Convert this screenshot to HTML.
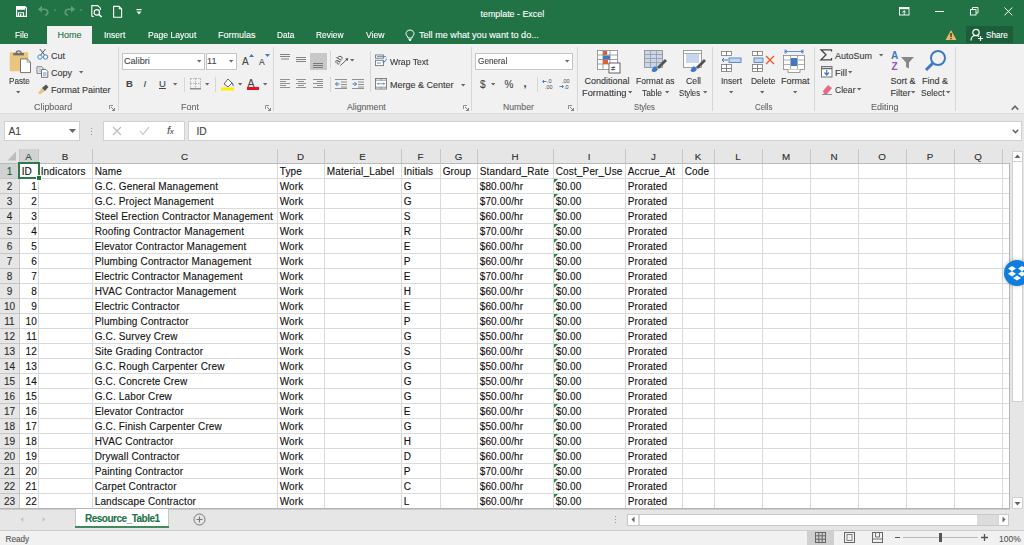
<!DOCTYPE html>
<html><head><meta charset="utf-8"><style>
*{box-sizing:border-box}
html,body{margin:0;padding:0}
body{width:1024px;height:545px;overflow:hidden;position:relative;background:#e6e6e6;font-family:"Liberation Sans",sans-serif;color:#262626}
.a{position:absolute}
svg.a{overflow:visible}
.t{position:absolute;white-space:nowrap;line-height:1;-webkit-text-stroke:0.1px currentColor}
.c{position:absolute;white-space:nowrap;line-height:1;color:#111;-webkit-text-stroke:0.12px #111}
.d{letter-spacing:0.15px}
.dr{letter-spacing:0.15px}
.vl{position:absolute;width:1px;background:#dadada}
.hl{position:absolute;height:1px;background:#dadada}
.gtri{position:absolute;width:0;height:0;border-top:4px solid #1f8a3b;border-right:4px solid transparent}
</style></head><body>

<div class="a" style="left:0px;top:0px;width:1024px;height:44px;background:#217346"></div>
<svg class="a" style="left:15px;top:5px;" width="13" height="13" viewBox="0 0 13 13"><path d="M1.6 1.6h8.4l1.4 1.4v8.4h-9.8z" fill="none" stroke="#fff" stroke-width="1.2"/><rect x="2" y="2" width="8" height="2.8" fill="#fff"/><path d="M3.5 11.4V7.8h5v3.6" fill="none" stroke="#fff" stroke-width="1.1"/><rect x="5" y="9" width="1.3" height="2" fill="#fff"/></svg>
<svg class="a" style="left:36px;top:4px;" width="22" height="14" viewBox="0 0 22 14"><path d="M1.8 5.2L6 1.8v6.8z" fill="#5f9c78"/><path d="M5 5.2h3.2c4 0 5 4.2 1 6.3" fill="none" stroke="#5f9c78" stroke-width="1.6"/><path d="M17.5 5.5h3l-1.5 1.7z" fill="#5f9c78"/></svg>
<svg class="a" style="left:62px;top:4px;" width="22" height="14" viewBox="0 0 22 14"><path d="M13.2 5.2L9 1.8v6.8z" fill="#5f9c78"/><path d="M10 5.2H6.8c-4 0-5 4.2-1 6.3" fill="none" stroke="#5f9c78" stroke-width="1.6"/><path d="M17.6 5.5h3l-1.5 1.7z" fill="#5f9c78"/></svg>
<svg class="a" style="left:90px;top:4px;" width="14" height="14" viewBox="0 0 14 14"><path d="M1.8 12.4V1.6h6l2.6 2.6v1.8" fill="none" stroke="#fff" stroke-width="1.1"/><path d="M1.8 12.4h2" stroke="#fff" stroke-width="1.1"/><circle cx="6.8" cy="8.4" r="2.7" fill="none" stroke="#fff" stroke-width="1.2"/><path d="M8.8 10.4l2.8 2.6" stroke="#fff" stroke-width="1.5"/></svg>
<svg class="a" style="left:112px;top:5px;" width="11" height="13" viewBox="0 0 11 13"><path d="M1.6 1.4h5.4l2.6 2.6v8.2h-8z" fill="none" stroke="#fff" stroke-width="1.1"/><path d="M6.8 1.4l2.8 2.8H6.8z" fill="#fff"/></svg>
<svg class="a" style="left:136px;top:9px;" width="7" height="7" viewBox="0 0 7 7"><rect x="0.5" y="0" width="5" height="1.2" fill="#fff"/><path d="M0.5 2.5h5l-2.5 3z" fill="#fff"/></svg>
<div class="t" style="left:480.5px;top:9.67px;font-size:8.9px;color:#fff;font-weight:normal;">template - Excel</div>
<svg class="a" style="left:899px;top:7px;" width="11" height="9" viewBox="0 0 11 9"><rect x="0.5" y="0.5" width="9.5" height="7.5" fill="none" stroke="#fff" stroke-width="0.9"/><path d="M0.5 1.6h9.5" stroke="#fff" stroke-width="1.2"/><path d="M5.2 3.5v4.5" stroke="#fff" stroke-width="0.9"/><path d="M3.2 5.5l2-1.6 2 1.6" fill="none" stroke="#fff" stroke-width="0.8"/></svg>
<div class="a" style="left:935px;top:11px;width:9px;height:1px;background:#fff"></div>
<svg class="a" style="left:970px;top:7px;" width="9" height="9" viewBox="0 0 9 9"><rect x="0.5" y="2.5" width="5.5" height="5.5" fill="none" stroke="#fff" stroke-width="0.9"/><path d="M2.5 2.5v-2h5.5v5.5h-2" fill="none" stroke="#fff" stroke-width="0.9"/></svg>
<svg class="a" style="left:1004px;top:7px;" width="9" height="9" viewBox="0 0 9 9"><path d="M0.5 0.5l7.8 7.8M8.3 0.5l-7.8 7.8" stroke="#fff" stroke-width="1"/></svg>
<div class="a" style="left:47px;top:26px;width:45px;height:18px;background:#f1f1f1"></div>
<div class="t" style="left:15px;top:31.38px;font-size:9px;color:#fff;font-weight:normal;transform:scaleX(0.931);transform-origin:0 0;">File</div>
<div class="t" style="left:57.5px;top:31.38px;font-size:9px;color:#217346;font-weight:normal;">Home</div>
<div class="t" style="left:103.5px;top:31.38px;font-size:9px;color:#fff;font-weight:normal;transform:scaleX(0.947);transform-origin:0 0;">Insert</div>
<div class="t" style="left:147.5px;top:31.38px;font-size:9px;color:#fff;font-weight:normal;transform:scaleX(0.955);transform-origin:0 0;">Page Layout</div>
<div class="t" style="left:218px;top:31.38px;font-size:9px;color:#fff;font-weight:normal;">Formulas</div>
<div class="t" style="left:276.5px;top:31.38px;font-size:9px;color:#fff;font-weight:normal;transform:scaleX(0.919);transform-origin:0 0;">Data</div>
<div class="t" style="left:316px;top:31.38px;font-size:9px;color:#fff;font-weight:normal;transform:scaleX(0.931);transform-origin:0 0;">Review</div>
<div class="t" style="left:365.5px;top:31.38px;font-size:9px;color:#fff;font-weight:normal;transform:scaleX(0.954);transform-origin:0 0;">View</div>
<svg class="a" style="left:405px;top:29px;" width="10" height="12" viewBox="0 0 10 12"><path d="M5 1 C2 1 1 3.5 1 4.5 C1 6.5 3 7.5 3 9 h4 C7 7.5 9 6.5 9 4.5 C9 3.5 8 1 5 1z" fill="none" stroke="#fff" stroke-width="1"/><path d="M3.5 10.5h3M4 11.5h2" stroke="#fff" stroke-width="0.9"/></svg>
<div class="t" style="left:419px;top:31.05px;font-size:9.1px;color:#fff;font-weight:normal;">Tell me what you want to do...</div>
<svg class="a" style="left:944px;top:29px;" width="14" height="12" viewBox="0 0 14 12"><path d="M7 1L12.5 11H1.5z" fill="#e9b965"/><rect x="6.3" y="4" width="1.4" height="4" fill="#333"/><rect x="6.3" y="9" width="1.4" height="1.2" fill="#333"/></svg>
<div class="a" style="left:966px;top:26px;width:47px;height:17px;background:#1b5e39"></div>
<svg class="a" style="left:970px;top:28px;" width="14" height="13" viewBox="0 0 14 13"><circle cx="6" cy="4.5" r="3.2" fill="none" stroke="#fff" stroke-width="1.2"/><path d="M1 12.5 C1 8.5 3 7.5 6 7.5 C7.5 7.5 8.5 8 9 8.5" fill="none" stroke="#fff" stroke-width="1.2"/><path d="M10.5 8v5M8 10.5h5" stroke="#fff" stroke-width="1.1"/></svg>
<div class="t" style="left:986px;top:32.06px;font-size:8.2px;color:#fff;font-weight:normal;">Share</div>
<div class="a" style="left:0px;top:44px;width:1024px;height:69px;background:#f1f1f1"></div>
<div class="a" style="left:0px;top:113px;width:1024px;height:1px;background:#dcdcdc"></div>
<div class="a" style="left:118px;top:47px;width:1px;height:64px;background:#d6d6d6"></div>
<div class="a" style="left:273px;top:47px;width:1px;height:64px;background:#d6d6d6"></div>
<div class="a" style="left:471px;top:47px;width:1px;height:64px;background:#d6d6d6"></div>
<div class="a" style="left:577px;top:47px;width:1px;height:64px;background:#d6d6d6"></div>
<div class="a" style="left:712px;top:47px;width:1px;height:64px;background:#d6d6d6"></div>
<div class="a" style="left:814px;top:47px;width:1px;height:64px;background:#d6d6d6"></div>
<div class="a" style="left:955px;top:47px;width:1px;height:64px;background:#d6d6d6"></div>
<div class="t" style="left:33.5px;top:103.14px;font-size:8.7px;color:#666;font-weight:normal;transform:scaleX(1.027);transform-origin:0 0;">Clipboard</div>
<div class="t" style="left:181px;top:103.14px;font-size:8.7px;color:#666;font-weight:normal;transform:scaleX(1.034);transform-origin:0 0;">Font</div>
<div class="t" style="left:347px;top:103.14px;font-size:8.7px;color:#666;font-weight:normal;">Alignment</div>
<div class="t" style="left:503px;top:103.14px;font-size:8.7px;color:#666;font-weight:normal;">Number</div>
<div class="t" style="left:634px;top:103.14px;font-size:8.7px;color:#666;font-weight:normal;transform:scaleX(0.886);transform-origin:0 0;">Styles</div>
<div class="t" style="left:754.5px;top:103.14px;font-size:8.7px;color:#666;font-weight:normal;transform:scaleX(0.904);transform-origin:0 0;">Cells</div>
<div class="t" style="left:871px;top:103.14px;font-size:8.7px;color:#666;font-weight:normal;transform:scaleX(1.034);transform-origin:0 0;">Editing</div>
<svg class="a" style="left:109px;top:105px;" width="6" height="6" viewBox="0 0 6 6"><path d="M0.5 4V0.5H4" fill="none" stroke="#777" stroke-width="0.8"/><path d="M2 2l3.5 3.5M5.5 3v2.5H3" fill="none" stroke="#777" stroke-width="0.9"/></svg>
<svg class="a" style="left:265px;top:105px;" width="6" height="6" viewBox="0 0 6 6"><path d="M0.5 4V0.5H4" fill="none" stroke="#777" stroke-width="0.8"/><path d="M2 2l3.5 3.5M5.5 3v2.5H3" fill="none" stroke="#777" stroke-width="0.9"/></svg>
<svg class="a" style="left:463px;top:105px;" width="6" height="6" viewBox="0 0 6 6"><path d="M0.5 4V0.5H4" fill="none" stroke="#777" stroke-width="0.8"/><path d="M2 2l3.5 3.5M5.5 3v2.5H3" fill="none" stroke="#777" stroke-width="0.9"/></svg>
<svg class="a" style="left:568px;top:105px;" width="6" height="6" viewBox="0 0 6 6"><path d="M0.5 4V0.5H4" fill="none" stroke="#777" stroke-width="0.8"/><path d="M2 2l3.5 3.5M5.5 3v2.5H3" fill="none" stroke="#777" stroke-width="0.9"/></svg>
<svg class="a" style="left:1011px;top:104.5px;" width="8" height="6" viewBox="0 0 8 6"><path d="M0.8 4.6L4 1.2l3.2 3.4" fill="none" stroke="#6a6a6a" stroke-width="1.6"/></svg>
<svg class="a" style="left:9px;top:48px;" width="24" height="26" viewBox="0 0 24 26"><rect x="0.7" y="4.2" width="18.5" height="19" rx="1" fill="#eac57f"/><rect x="4.2" y="5" width="10.8" height="2.4" fill="#707070"/><path d="M7.2 5.2a2.5 2.3 0 0 1 5 0" fill="none" stroke="#707070" stroke-width="1.3"/><path d="M11.5 10.9h6.7l3.3 3.3v10.4h-10z" fill="#fff" stroke="#666" stroke-width="0.9"/><path d="M18.2 10.9v3.3h3.3" fill="none" stroke="#888" stroke-width="0.8"/></svg>
<div class="t" style="left:8.75px;top:77.38px;font-size:9px;color:#383838;font-weight:normal;transform:scaleX(0.902);transform-origin:0 0;">Paste</div>
<svg class="a" style="left:15.8px;top:90.7px;" width="5" height="3" viewBox="0 0 5 3"><path d="M0 0h4.4l-2.2 2.6z" fill="#666"/></svg>
<svg class="a" style="left:36px;top:48px;" width="13" height="13" viewBox="0 0 13 13"><path d="M3.8 1l5 6.2M9.5 1L4.5 7.2" stroke="#555" stroke-width="1"/><circle cx="4" cy="9" r="2.2" fill="none" stroke="#4a86c8" stroke-width="1"/><circle cx="9.6" cy="9" r="2.2" fill="none" stroke="#4a86c8" stroke-width="1"/></svg>
<div class="t" style="left:51px;top:51.88px;font-size:9px;color:#383838;font-weight:normal;">Cut</div>
<svg class="a" style="left:36px;top:66px;" width="13" height="12" viewBox="0 0 13 12"><path d="M1 0.8h5l1 1v5.5H1z" fill="#fff" stroke="#666" stroke-width="0.9"/><path d="M2.5 3h2.5M2.5 5h2.5" stroke="#4a86c8" stroke-width="0.8"/><path d="M5.5 3.5h4.5l1.8 1.8v6H5.5z" fill="#fff" stroke="#666" stroke-width="0.9"/><path d="M7 7h3.5M7 9h3.5" stroke="#4a86c8" stroke-width="0.9"/></svg>
<div class="t" style="left:51px;top:68.88px;font-size:9px;color:#383838;font-weight:normal;">Copy</div>
<svg class="a" style="left:79.0px;top:71.4px;" width="5" height="3" viewBox="0 0 5 3"><path d="M0 0h4.4l-2.2 2.6z" fill="#666"/></svg>
<svg class="a" style="left:37px;top:84px;" width="12" height="11" viewBox="0 0 12 11"><path d="M1 9l4-5 3 3-5 3.5z" fill="#e8c47c"/><path d="M5 4l4-3.5 2.5 2.5-3.5 4z" fill="#555"/></svg>
<div class="t" style="left:51px;top:85.88px;font-size:9px;color:#383838;font-weight:normal;">Format Painter</div>
<div class="a" style="left:122px;top:52.5px;width:82.5px;height:17px;background:#fff;border:1px solid #c6c6c6"></div>
<div class="t" style="left:124px;top:56.80px;font-size:9.1px;color:#444;font-weight:normal;">Calibri</div>
<svg class="a" style="left:196.8px;top:59.7px;" width="5" height="3" viewBox="0 0 5 3"><path d="M0 0h4.4l-2.2 2.6z" fill="#666"/></svg>
<div class="a" style="left:205.8px;top:52.5px;width:31px;height:17px;background:#fff;border:1px solid #c6c6c6"></div>
<div class="t" style="left:207px;top:56.80px;font-size:9.1px;color:#444;font-weight:normal;">11</div>
<svg class="a" style="left:228.8px;top:59.7px;" width="5" height="3" viewBox="0 0 5 3"><path d="M0 0h4.4l-2.2 2.6z" fill="#666"/></svg>
<div class="t" style="left:242px;top:56.53px;font-size:10px;color:#444;font-weight:normal;">A</div>
<svg class="a" style="left:249px;top:54px;" width="5" height="3" viewBox="0 0 5 3"><path d="M0 3h5L2.5 0z" fill="#3f78c6"/></svg>
<div class="t" style="left:259px;top:57.80px;font-size:8.5px;color:#444;font-weight:normal;">A</div>
<svg class="a" style="left:265px;top:54px;" width="5" height="3" viewBox="0 0 5 3"><path d="M0 0h5L2.5 3z" fill="#3f78c6"/></svg>
<div class="t" style="left:126px;top:79.46px;font-size:9.5px;color:#444;font-weight:bold;">B</div>
<div class="t" style="left:143.5px;top:79.46px;font-size:9.5px;color:#444;font-weight:normal;font-style:italic">I</div>
<div class="t" style="left:159px;top:79.46px;font-size:9.5px;color:#444;font-weight:normal;text-decoration:underline">U</div>
<svg class="a" style="left:172.8px;top:83.2px;" width="5" height="3" viewBox="0 0 5 3"><path d="M0 0h4.4l-2.2 2.6z" fill="#666"/></svg>
<div class="a" style="left:184px;top:77px;width:1px;height:15px;background:#d6d6d6"></div>
<svg class="a" style="left:190px;top:78px;" width="11" height="12" viewBox="0 0 11 12"><path d="M0.5 0.5h10v10M0.5 0.5v10M5.5 0.5v10M0.5 5.5h10" fill="none" stroke="#aaa" stroke-width="0.9" stroke-dasharray="1.5,1"/><path d="M0 10.8h11" stroke="#777" stroke-width="1.2"/></svg>
<svg class="a" style="left:205.3px;top:83.2px;" width="5" height="3" viewBox="0 0 5 3"><path d="M0 0h4.4l-2.2 2.6z" fill="#666"/></svg>
<div class="a" style="left:215px;top:77px;width:1px;height:15px;background:#d6d6d6"></div>
<svg class="a" style="left:221px;top:78px;" width="14" height="13" viewBox="0 0 14 13"><path d="M3 6l4-5 4 4-4 4z" fill="#fff" stroke="#555" stroke-width="0.9"/><path d="M11 5c1 1 1.5 2 1 3" fill="none" stroke="#3f78c6" stroke-width="1.2"/><rect x="0" y="9.5" width="13" height="3" fill="#ffee00"/></svg>
<svg class="a" style="left:237.8px;top:83.2px;" width="5" height="3" viewBox="0 0 5 3"><path d="M0 0h4.4l-2.2 2.6z" fill="#666"/></svg>
<div class="t" style="left:247.5px;top:77.61px;font-size:10.5px;color:#444;font-weight:normal;">A</div>
<div class="a" style="left:247px;top:87px;width:12px;height:2.6px;background:#e8141a"></div>
<svg class="a" style="left:263.3px;top:83.2px;" width="5" height="3" viewBox="0 0 5 3"><path d="M0 0h4.4l-2.2 2.6z" fill="#666"/></svg>
<svg class="a" style="left:280px;top:54px;" width="11" height="7" viewBox="0 0 11 7"><path d="M0 0.5h10M0 2.5h10M1 5h8" stroke="#666" stroke-width="0.8"/></svg>
<svg class="a" style="left:296px;top:56px;" width="11" height="7" viewBox="0 0 11 7"><path d="M0 1.5h10M0 3.5h10M0 5.5h10" stroke="#666" stroke-width="0.8"/></svg>
<div class="a" style="left:310px;top:52.5px;width:17px;height:17px;background:#c8c8c8"></div>
<svg class="a" style="left:313px;top:60px;" width="11" height="8" viewBox="0 0 11 8"><path d="M0 3.5h10M0 5.5h10M0 7.5h10" stroke="#666" stroke-width="0.8"/></svg>
<div class="a" style="left:330px;top:51px;width:1px;height:17px;background:#d6d6d6"></div>
<svg class="a" style="left:335px;top:53px;" width="15" height="15" viewBox="0 0 15 15"><text x="0" y="0" font-size="8.5" font-family="Liberation Sans" fill="#505050" transform="translate(3.2,12.2) rotate(-58)">ab</text><path d="M5.3 12.6L12.3 6" stroke="#555" stroke-width="0.9"/><path d="M13.3 5l-3.2 0.8 2.4 2.4z" fill="#555"/></svg>
<svg class="a" style="left:349.8px;top:58.7px;" width="5" height="3" viewBox="0 0 5 3"><path d="M0 0h4.4l-2.2 2.6z" fill="#666"/></svg>
<div class="a" style="left:370px;top:51px;width:1px;height:41px;background:#d6d6d6"></div>
<svg class="a" style="left:375px;top:53px;" width="16" height="14" viewBox="0 0 16 14"><rect x="0.5" y="2" width="8" height="3.2" fill="#fff" stroke="#777" stroke-width="0.9"/><rect x="0.5" y="7.3" width="8" height="5.3" fill="#fff" stroke="#777" stroke-width="0.9"/><path d="M1.9 3.6h9.2M1.9 10h3.9" stroke="#4a86c8" stroke-width="0.9"/><path d="M11.2 5.6c0.3 1.6-0.6 2.8-2.4 3.2" fill="none" stroke="#4a86c8" stroke-width="1"/><path d="M7 9l2.1-1.6v2.9z" fill="#4a86c8"/></svg>
<div class="t" style="left:390px;top:57.88px;font-size:9px;color:#383838;font-weight:normal;transform:scaleX(0.958);transform-origin:0 0;">Wrap Text</div>
<svg class="a" style="left:280px;top:79px;" width="11" height="9" viewBox="0 0 11 9"><path d="M0 0.5h10M0 2.5h6M0 4.5h10M0 6.5h6M0 8.5h10" stroke="#777" stroke-width="0.8"/></svg>
<svg class="a" style="left:296px;top:79px;" width="11" height="9" viewBox="0 0 11 9"><path d="M0 0.5h10M2 2.5h6M0 4.5h10M2 6.5h6M0 8.5h10" stroke="#777" stroke-width="0.8"/></svg>
<svg class="a" style="left:313px;top:79px;" width="11" height="9" viewBox="0 0 11 9"><path d="M0 0.5h10M4 2.5h6M0 4.5h10M4 6.5h6M0 8.5h10" stroke="#777" stroke-width="0.8"/></svg>
<div class="a" style="left:330px;top:77px;width:1px;height:15px;background:#d6d6d6"></div>
<svg class="a" style="left:335px;top:79px;" width="13" height="10" viewBox="0 0 13 10"><path d="M0 0.5h12M6 3h6M6 5.5h6M6 8h6M0 9.5h12" stroke="#777" stroke-width="0.8"/><path d="M0.5 5h4M2.5 3l-2 2 2 2" fill="none" stroke="#3f78c6" stroke-width="1"/></svg>
<svg class="a" style="left:352px;top:79px;" width="13" height="10" viewBox="0 0 13 10"><path d="M0 0.5h12M6 3h6M6 5.5h6M6 8h6M0 9.5h12" stroke="#777" stroke-width="0.8"/><path d="M0.5 5h4M2.5 3l2 2-2 2" fill="none" stroke="#3f78c6" stroke-width="1"/></svg>
<svg class="a" style="left:375px;top:78px;" width="13" height="12" viewBox="0 0 13 12"><rect x="0.5" y="0.5" width="11" height="10.5" fill="#fff" stroke="#777" stroke-width="0.9"/><path d="M0.5 2.2h11M0.5 9.2h11M6 0.5v1.7M6 9.2v1.8" stroke="#777" stroke-width="0.8"/><path d="M2.5 5.7h7" stroke="#4a86c8" stroke-width="0.8"/><path d="M2 5.7l1.6-1.3v2.6zM10 5.7l-1.6-1.3v2.6z" fill="#4a86c8"/></svg>
<div class="t" style="left:390px;top:80.88px;font-size:9px;color:#383838;font-weight:normal;">Merge &amp; Center</div>
<svg class="a" style="left:460.55px;top:83.7px;" width="5" height="3" viewBox="0 0 5 3"><path d="M0 0h4.4l-2.2 2.6z" fill="#666"/></svg>
<div class="a" style="left:475px;top:52.5px;width:98px;height:17px;background:#fff;border:1px solid #c6c6c6"></div>
<div class="t" style="left:477.75px;top:56.80px;font-size:9.1px;color:#444;font-weight:normal;transform:scaleX(0.904);transform-origin:0 0;">General</div>
<svg class="a" style="left:565.3px;top:59.7px;" width="5" height="3" viewBox="0 0 5 3"><path d="M0 0h4.4l-2.2 2.6z" fill="#666"/></svg>
<div class="t" style="left:480px;top:79.53px;font-size:10px;color:#444;font-weight:normal;">$</div>
<svg class="a" style="left:490.8px;top:83.2px;" width="5" height="3" viewBox="0 0 5 3"><path d="M0 0h4.4l-2.2 2.6z" fill="#666"/></svg>
<div class="t" style="left:504.5px;top:79.53px;font-size:10px;color:#444;font-weight:normal;">%</div>
<div class="t" style="left:523.5px;top:77.69px;font-size:11px;color:#444;font-weight:bold;">,</div>
<div class="a" style="left:537px;top:77px;width:1px;height:15px;background:#d6d6d6"></div>
<svg class="a" style="left:542px;top:78px;" width="13" height="12" viewBox="0 0 13 12"><path d="M0.5 3.5h4M2 2l-1.5 1.5 1.5 1.5" fill="none" stroke="#3f78c6" stroke-width="0.9"/><text x="5" y="5" font-size="5.5" font-family="Liberation Sans" fill="#444">.0</text><text x="3" y="11" font-size="5.5" font-family="Liberation Sans" fill="#444">.00</text></svg>
<svg class="a" style="left:559px;top:78px;" width="13" height="12" viewBox="0 0 13 12"><path d="M0.5 8.5h4M3 7l1.5 1.5-1.5 1.5" fill="none" stroke="#3f78c6" stroke-width="0.9"/><text x="3" y="5" font-size="5.5" font-family="Liberation Sans" fill="#444">.00</text><text x="5" y="11" font-size="5.5" font-family="Liberation Sans" fill="#444">.0</text></svg>
<svg class="a" style="left:597px;top:50px;" width="24" height="24" viewBox="0 0 24 24"><g fill="#fff" stroke="#888" stroke-width="0.8"><rect x="0.5" y="0.5" width="20" height="19"/></g><path d="M0.5 5h20M0.5 9.5h20M0.5 14h20M6 0.5v19M13 0.5v19" stroke="#888" stroke-width="0.8"/><rect x="6" y="1" width="4" height="4" fill="#e55f2b"/><rect x="6" y="5.5" width="7" height="4" fill="#3f78c6"/><rect x="6" y="10" width="5" height="4" fill="#e55f2b"/><rect x="12" y="13" width="11" height="10" fill="#fff" stroke="#555" stroke-width="0.9"/><text x="14" y="21" font-size="8" font-family="Liberation Sans" fill="#333">≠</text></svg>
<div class="t" style="left:584.5px;top:77.38px;font-size:9px;color:#383838;font-weight:normal;">Conditional</div>
<div class="t" style="left:582px;top:89.38px;font-size:9px;color:#383838;font-weight:normal;transform:scaleX(1.035);transform-origin:0 0;">Formatting</div>
<svg class="a" style="left:627.8px;top:91.4px;" width="5" height="3" viewBox="0 0 5 3"><path d="M0 0h4.4l-2.2 2.6z" fill="#666"/></svg>
<svg class="a" style="left:644px;top:50px;" width="24" height="23" viewBox="0 0 24 23"><rect x="0.5" y="0.5" width="18" height="17" fill="#c5d6ee" stroke="#888" stroke-width="0.8"/><path d="M0.5 4.5h18M0.5 8.5h18M0.5 12.5h18M6.5 0.5v17M12.5 0.5v17" stroke="#999" stroke-width="0.8"/><path d="M10 22c-2 0-3-1-2-3l3-3 3 3c-1 2-2 3-4 3z" fill="#3f78c6"/><path d="M13 17l8-8 2 2-8 8z" fill="#555"/></svg>
<div class="t" style="left:636px;top:77.38px;font-size:9px;color:#383838;font-weight:normal;transform:scaleX(0.951);transform-origin:0 0;">Format as</div>
<div class="t" style="left:642px;top:89.38px;font-size:9px;color:#383838;font-weight:normal;transform:scaleX(0.930);transform-origin:0 0;">Table</div>
<svg class="a" style="left:664.8px;top:91.4px;" width="5" height="3" viewBox="0 0 5 3"><path d="M0 0h4.4l-2.2 2.6z" fill="#666"/></svg>
<svg class="a" style="left:683px;top:50px;" width="24" height="23" viewBox="0 0 24 23"><rect x="0.5" y="0.5" width="18" height="17" fill="#fff" stroke="#888" stroke-width="0.8"/><rect x="3" y="4" width="13" height="9" fill="#c5d6ee"/><path d="M0.5 3.5h18" stroke="#999" stroke-width="0.8"/><path d="M10 22c-2 0-3-1-2-3l3-3 3 3c-1 2-2 3-4 3z" fill="#3f78c6"/><path d="M13 17l8-8 2 2-8 8z" fill="#555"/></svg>
<div class="t" style="left:686px;top:77.38px;font-size:9px;color:#383838;font-weight:normal;transform:scaleX(0.968);transform-origin:0 0;">Cell</div>
<div class="t" style="left:679px;top:89.38px;font-size:9px;color:#383838;font-weight:normal;transform:scaleX(0.857);transform-origin:0 0;">Styles</div>
<svg class="a" style="left:703.3px;top:91.4px;" width="5" height="3" viewBox="0 0 5 3"><path d="M0 0h4.4l-2.2 2.6z" fill="#666"/></svg>
<svg class="a" style="left:721px;top:50px;" width="22" height="22" viewBox="0 0 22 22"><g fill="#fff" stroke="#777" stroke-width="0.8"><rect x="0.5" y="1.5" width="5" height="4"/><rect x="5.5" y="1.5" width="5" height="4"/><rect x="0.5" y="14.5" width="5" height="4"/><rect x="5.5" y="14.5" width="5" height="4"/><rect x="0.5" y="18.5" width="5" height="3"/><rect x="5.5" y="18.5" width="5" height="3"/></g><rect x="8" y="8" width="12" height="4.5" fill="#c5d6ee" stroke="#3f78c6" stroke-width="0.8"/><path d="M1 10h6M3 8l-2 2 2 2" fill="none" stroke="#3f78c6" stroke-width="1"/></svg>
<div class="t" style="left:721px;top:77.38px;font-size:9px;color:#383838;font-weight:normal;transform:scaleX(0.933);transform-origin:0 0;">Insert</div>
<svg class="a" style="left:729.3px;top:91.4px;" width="5" height="3" viewBox="0 0 5 3"><path d="M0 0h4.4l-2.2 2.6z" fill="#666"/></svg>
<svg class="a" style="left:752px;top:50px;" width="24" height="22" viewBox="0 0 24 22"><g fill="#fff" stroke="#777" stroke-width="0.8"><rect x="0.5" y="1.5" width="5" height="4"/><rect x="5.5" y="1.5" width="5" height="4"/><rect x="0.5" y="14.5" width="5" height="4"/><rect x="5.5" y="14.5" width="5" height="4"/><rect x="0.5" y="18.5" width="5" height="3"/><rect x="5.5" y="18.5" width="5" height="3"/></g><rect x="2" y="8" width="9" height="4.5" fill="#c5d6ee" stroke="#3f78c6" stroke-width="0.8"/><path d="M14 6l8 8M22 6l-8 8" stroke="#e55f2b" stroke-width="1.4"/></svg>
<div class="t" style="left:751px;top:77.38px;font-size:9px;color:#383838;font-weight:normal;transform:scaleX(0.942);transform-origin:0 0;">Delete</div>
<svg class="a" style="left:759.8px;top:91.4px;" width="5" height="3" viewBox="0 0 5 3"><path d="M0 0h4.4l-2.2 2.6z" fill="#666"/></svg>
<svg class="a" style="left:783px;top:49px;" width="23" height="24" viewBox="0 0 23 24"><path d="M2 2.5h18M2 0.5v4M20 0.5v4M4 1l-2 1.5 2 1.5M18 1l2 1.5-2 1.5" fill="none" stroke="#3f78c6" stroke-width="0.8"/><rect x="0.5" y="6.5" width="21" height="14" fill="#fff" stroke="#888" stroke-width="0.8"/><path d="M0.5 11h21M0.5 15.5h21M7.5 6.5v14M14.5 6.5v14" stroke="#999" stroke-width="0.8"/><rect x="8" y="9" width="6" height="8" fill="#3f78c6"/><path d="M5 20.5v3h12v-3" fill="#fff" stroke="#888" stroke-width="0.8"/></svg>
<div class="t" style="left:781px;top:77.38px;font-size:9px;color:#383838;font-weight:normal;">Format</div>
<svg class="a" style="left:792.8px;top:91.4px;" width="5" height="3" viewBox="0 0 5 3"><path d="M0 0h4.4l-2.2 2.6z" fill="#666"/></svg>
<svg class="a" style="left:820px;top:49px;" width="13" height="12" viewBox="0 0 13 12"><path d="M11.5 2.5V0.8H1l5 5-5 5h10.5V9" fill="none" stroke="#444" stroke-width="1.3"/></svg>
<div class="t" style="left:835px;top:51.88px;font-size:9px;color:#383838;font-weight:normal;">AutoSum</div>
<svg class="a" style="left:879.3px;top:53.7px;" width="5" height="3" viewBox="0 0 5 3"><path d="M0 0h4.4l-2.2 2.6z" fill="#666"/></svg>
<svg class="a" style="left:821px;top:66px;" width="12" height="12" viewBox="0 0 12 12"><rect x="0.5" y="0.5" width="10.5" height="10.5" fill="#fff" stroke="#666" stroke-width="0.9"/><path d="M0.5 2.5h10.5" stroke="#666" stroke-width="1.5"/><path d="M5.75 4v5M3.5 6.5l2.25 2.5 2.25-2.5" fill="none" stroke="#3f78c6" stroke-width="1.2"/></svg>
<div class="t" style="left:835px;top:68.88px;font-size:9px;color:#383838;font-weight:normal;transform:scaleX(1.043);transform-origin:0 0;">Fill</div>
<svg class="a" style="left:847.5999999999999px;top:70.9px;" width="5" height="3" viewBox="0 0 5 3"><path d="M0 0h4.4l-2.2 2.6z" fill="#666"/></svg>
<svg class="a" style="left:821px;top:84px;" width="12" height="11" viewBox="0 0 12 11"><path d="M2 7l5-6 4 3-5 6H3z" fill="#e86b86"/><path d="M1 10.5h10" stroke="#777" stroke-width="0.8"/></svg>
<div class="t" style="left:835px;top:85.88px;font-size:9px;color:#383838;font-weight:normal;transform:scaleX(0.953);transform-origin:0 0;">Clear</div>
<svg class="a" style="left:856.8px;top:88.0px;" width="5" height="3" viewBox="0 0 5 3"><path d="M0 0h4.4l-2.2 2.6z" fill="#666"/></svg>
<svg class="a" style="left:891px;top:50px;" width="24" height="21" viewBox="0 0 24 21"><text x="0" y="9" font-size="10" font-family="Liberation Sans" font-weight="bold" fill="#3f78c6">A</text><text x="0.5" y="20" font-size="10" font-family="Liberation Sans" font-weight="bold" fill="#9b59b6">Z</text><path d="M10 7h13l-5 5.5v6l-3-1.5v-4.5z" fill="#888"/></svg>
<div class="t" style="left:890.5px;top:77.38px;font-size:9px;color:#383838;font-weight:normal;">Sort &amp;</div>
<div class="t" style="left:890.5px;top:89.38px;font-size:9px;color:#383838;font-weight:normal;">Filter</div>
<svg class="a" style="left:911.0px;top:91.4px;" width="5" height="3" viewBox="0 0 5 3"><path d="M0 0h4.4l-2.2 2.6z" fill="#666"/></svg>
<svg class="a" style="left:924px;top:49px;" width="23" height="23" viewBox="0 0 23 23"><circle cx="14" cy="9" r="7" fill="none" stroke="#3f78c6" stroke-width="2"/><path d="M9 14l-7 7" stroke="#3f78c6" stroke-width="3"/></svg>
<div class="t" style="left:922px;top:77.38px;font-size:9px;color:#383838;font-weight:normal;">Find &amp;</div>
<div class="t" style="left:920.5px;top:89.38px;font-size:9px;color:#383838;font-weight:normal;transform:scaleX(0.940);transform-origin:0 0;">Select</div>
<svg class="a" style="left:946.1999999999999px;top:91.4px;" width="5" height="3" viewBox="0 0 5 3"><path d="M0 0h4.4l-2.2 2.6z" fill="#666"/></svg>
<div class="a" style="left:4px;top:121px;width:76px;height:20px;background:#fff;border:1px solid #d0d0d0"></div>
<div class="t" style="left:8.5px;top:126.78px;font-size:10.3px;color:#444;font-weight:normal;">A1</div>
<svg class="a" style="left:69px;top:129px;" width="7" height="4" viewBox="0 0 7 4"><path d="M0 0h7L3.5 4z" fill="#666"/></svg>
<div class="a" style="left:91px;top:128px;width:1px;height:1.2px;background:#999"></div>
<div class="a" style="left:91px;top:131px;width:1px;height:1.2px;background:#999"></div>
<div class="a" style="left:91px;top:134px;width:1px;height:1.2px;background:#999"></div>
<div class="a" style="left:103px;top:121px;width:82px;height:20px;background:#fff;border:1px solid #d0d0d0"></div>
<svg class="a" style="left:112px;top:126px;" width="11" height="10" viewBox="0 0 11 10"><path d="M1 1l8 8M9 1l-8 8" stroke="#bdbdbd" stroke-width="1.1"/></svg>
<svg class="a" style="left:139px;top:126px;" width="11" height="10" viewBox="0 0 11 10"><path d="M1 5l3 3.5L10 1" fill="none" stroke="#bdbdbd" stroke-width="1.1"/></svg>
<div class="t" style="left:167px;top:124.77px;font-size:11.5px;color:#555;font-weight:normal;font-family:"Liberation Serif",serif"><i>f</i><i style="font-size:8px;margin-left:-0.5px">x</i></div>
<div class="a" style="left:188px;top:121px;width:834px;height:20px;background:#fff;border:1px solid #d0d0d0"></div>
<div class="t" style="left:196.5px;top:126.78px;font-size:10.3px;color:#444;font-weight:normal;">ID</div>
<svg class="a" style="left:1012px;top:128.5px;" width="7" height="5" viewBox="0 0 7 5"><path d="M0.8 0.8L3.5 3.6 6.2 0.8" fill="none" stroke="#6a6a6a" stroke-width="1.6"/></svg>
<div class="a" style="left:19px;top:163px;width:990px;height:345px;background:#fff"></div>
<div class="a" style="left:19px;top:149px;width:19px;height:14px;background:#d2d2d2"></div>
<div class="a" style="left:0;top:164px;width:19px;height:14px;background:#d2d2d2"></div>
<svg class="a" style="left:7px;top:151px" width="10" height="10"><path d="M9 0.5V9.5H0.5z" fill="#bdbdbd"/></svg>
<div class="vl" style="left:38px;top:163px;height:345px"></div>
<div class="vl" style="left:38px;top:149px;height:14px;background:#c6c6c6"></div>
<div class="vl" style="left:92px;top:163px;height:345px"></div>
<div class="vl" style="left:92px;top:149px;height:14px;background:#c6c6c6"></div>
<div class="vl" style="left:277px;top:163px;height:345px"></div>
<div class="vl" style="left:277px;top:149px;height:14px;background:#c6c6c6"></div>
<div class="vl" style="left:324px;top:163px;height:345px"></div>
<div class="vl" style="left:324px;top:149px;height:14px;background:#c6c6c6"></div>
<div class="vl" style="left:401px;top:163px;height:345px"></div>
<div class="vl" style="left:401px;top:149px;height:14px;background:#c6c6c6"></div>
<div class="vl" style="left:440px;top:163px;height:345px"></div>
<div class="vl" style="left:440px;top:149px;height:14px;background:#c6c6c6"></div>
<div class="vl" style="left:477px;top:163px;height:345px"></div>
<div class="vl" style="left:477px;top:149px;height:14px;background:#c6c6c6"></div>
<div class="vl" style="left:553px;top:163px;height:345px"></div>
<div class="vl" style="left:553px;top:149px;height:14px;background:#c6c6c6"></div>
<div class="vl" style="left:625px;top:163px;height:345px"></div>
<div class="vl" style="left:625px;top:149px;height:14px;background:#c6c6c6"></div>
<div class="vl" style="left:682px;top:163px;height:345px"></div>
<div class="vl" style="left:682px;top:149px;height:14px;background:#c6c6c6"></div>
<div class="vl" style="left:714px;top:163px;height:345px"></div>
<div class="vl" style="left:714px;top:149px;height:14px;background:#c6c6c6"></div>
<div class="vl" style="left:762px;top:163px;height:345px"></div>
<div class="vl" style="left:762px;top:149px;height:14px;background:#c6c6c6"></div>
<div class="vl" style="left:810px;top:163px;height:345px"></div>
<div class="vl" style="left:810px;top:149px;height:14px;background:#c6c6c6"></div>
<div class="vl" style="left:858px;top:163px;height:345px"></div>
<div class="vl" style="left:858px;top:149px;height:14px;background:#c6c6c6"></div>
<div class="vl" style="left:906px;top:163px;height:345px"></div>
<div class="vl" style="left:906px;top:149px;height:14px;background:#c6c6c6"></div>
<div class="vl" style="left:954px;top:163px;height:345px"></div>
<div class="vl" style="left:954px;top:149px;height:14px;background:#c6c6c6"></div>
<div class="vl" style="left:1002px;top:163px;height:345px"></div>
<div class="vl" style="left:1002px;top:149px;height:14px;background:#c6c6c6"></div>
<div class="vl" style="left:19px;top:149px;height:360px;background:#c6c6c6"></div>
<div class="vl" style="left:1009px;top:163px;height:346px;background:#b5b5b5"></div>
<div class="hl" style="left:20px;top:178px;width:989px"></div>
<div class="hl" style="left:0;top:178px;width:19px;background:#c6c6c6"></div>
<div class="hl" style="left:20px;top:193px;width:989px"></div>
<div class="hl" style="left:0;top:193px;width:19px;background:#c6c6c6"></div>
<div class="hl" style="left:20px;top:208px;width:989px"></div>
<div class="hl" style="left:0;top:208px;width:19px;background:#c6c6c6"></div>
<div class="hl" style="left:20px;top:223px;width:989px"></div>
<div class="hl" style="left:0;top:223px;width:19px;background:#c6c6c6"></div>
<div class="hl" style="left:20px;top:238px;width:989px"></div>
<div class="hl" style="left:0;top:238px;width:19px;background:#c6c6c6"></div>
<div class="hl" style="left:20px;top:253px;width:989px"></div>
<div class="hl" style="left:0;top:253px;width:19px;background:#c6c6c6"></div>
<div class="hl" style="left:20px;top:268px;width:989px"></div>
<div class="hl" style="left:0;top:268px;width:19px;background:#c6c6c6"></div>
<div class="hl" style="left:20px;top:283px;width:989px"></div>
<div class="hl" style="left:0;top:283px;width:19px;background:#c6c6c6"></div>
<div class="hl" style="left:20px;top:298px;width:989px"></div>
<div class="hl" style="left:0;top:298px;width:19px;background:#c6c6c6"></div>
<div class="hl" style="left:20px;top:313px;width:989px"></div>
<div class="hl" style="left:0;top:313px;width:19px;background:#c6c6c6"></div>
<div class="hl" style="left:20px;top:328px;width:989px"></div>
<div class="hl" style="left:0;top:328px;width:19px;background:#c6c6c6"></div>
<div class="hl" style="left:20px;top:343px;width:989px"></div>
<div class="hl" style="left:0;top:343px;width:19px;background:#c6c6c6"></div>
<div class="hl" style="left:20px;top:358px;width:989px"></div>
<div class="hl" style="left:0;top:358px;width:19px;background:#c6c6c6"></div>
<div class="hl" style="left:20px;top:373px;width:989px"></div>
<div class="hl" style="left:0;top:373px;width:19px;background:#c6c6c6"></div>
<div class="hl" style="left:20px;top:388px;width:989px"></div>
<div class="hl" style="left:0;top:388px;width:19px;background:#c6c6c6"></div>
<div class="hl" style="left:20px;top:403px;width:989px"></div>
<div class="hl" style="left:0;top:403px;width:19px;background:#c6c6c6"></div>
<div class="hl" style="left:20px;top:418px;width:989px"></div>
<div class="hl" style="left:0;top:418px;width:19px;background:#c6c6c6"></div>
<div class="hl" style="left:20px;top:433px;width:989px"></div>
<div class="hl" style="left:0;top:433px;width:19px;background:#c6c6c6"></div>
<div class="hl" style="left:20px;top:448px;width:989px"></div>
<div class="hl" style="left:0;top:448px;width:19px;background:#c6c6c6"></div>
<div class="hl" style="left:20px;top:463px;width:989px"></div>
<div class="hl" style="left:0;top:463px;width:19px;background:#c6c6c6"></div>
<div class="hl" style="left:20px;top:478px;width:989px"></div>
<div class="hl" style="left:0;top:478px;width:19px;background:#c6c6c6"></div>
<div class="hl" style="left:20px;top:493px;width:989px"></div>
<div class="hl" style="left:0;top:493px;width:19px;background:#c6c6c6"></div>
<div class="hl" style="left:20px;top:508px;width:989px"></div>
<div class="hl" style="left:0;top:508px;width:19px;background:#c6c6c6"></div>
<div class="hl" style="left:0;top:163px;width:1009px;background:#bababa"></div>
<div class="hl" style="left:0;top:508px;width:1010px;background:#b5b5b5"></div>
<div class="c" style="left:19px;width:19px;top:152.20px;font-size:9.8px;text-align:center;color:#217346">A</div>
<div class="c" style="left:38px;width:54px;top:152.20px;font-size:9.8px;text-align:center;color:#333">B</div>
<div class="c" style="left:92px;width:185px;top:152.20px;font-size:9.8px;text-align:center;color:#333">C</div>
<div class="c" style="left:277px;width:47px;top:152.20px;font-size:9.8px;text-align:center;color:#333">D</div>
<div class="c" style="left:324px;width:77px;top:152.20px;font-size:9.8px;text-align:center;color:#333">E</div>
<div class="c" style="left:401px;width:39px;top:152.20px;font-size:9.8px;text-align:center;color:#333">F</div>
<div class="c" style="left:440px;width:37px;top:152.20px;font-size:9.8px;text-align:center;color:#333">G</div>
<div class="c" style="left:477px;width:76px;top:152.20px;font-size:9.8px;text-align:center;color:#333">H</div>
<div class="c" style="left:553px;width:72px;top:152.20px;font-size:9.8px;text-align:center;color:#333">I</div>
<div class="c" style="left:625px;width:57px;top:152.20px;font-size:9.8px;text-align:center;color:#333">J</div>
<div class="c" style="left:682px;width:32px;top:152.20px;font-size:9.8px;text-align:center;color:#333">K</div>
<div class="c" style="left:714px;width:48px;top:152.20px;font-size:9.8px;text-align:center;color:#333">L</div>
<div class="c" style="left:762px;width:48px;top:152.20px;font-size:9.8px;text-align:center;color:#333">M</div>
<div class="c" style="left:810px;width:48px;top:152.20px;font-size:9.8px;text-align:center;color:#333">N</div>
<div class="c" style="left:858px;width:48px;top:152.20px;font-size:9.8px;text-align:center;color:#333">O</div>
<div class="c" style="left:906px;width:48px;top:152.20px;font-size:9.8px;text-align:center;color:#333">P</div>
<div class="c" style="left:954px;width:48px;top:152.20px;font-size:9.8px;text-align:center;color:#333">Q</div>
<div class="c" style="left:0;width:19px;top:167.23px;font-size:10px;text-align:center;color:#217346">1</div>
<div class="c" style="left:0;width:19px;top:182.23px;font-size:10px;text-align:center;color:#333">2</div>
<div class="c" style="left:0;width:19px;top:197.23px;font-size:10px;text-align:center;color:#333">3</div>
<div class="c" style="left:0;width:19px;top:212.23px;font-size:10px;text-align:center;color:#333">4</div>
<div class="c" style="left:0;width:19px;top:227.23px;font-size:10px;text-align:center;color:#333">5</div>
<div class="c" style="left:0;width:19px;top:242.23px;font-size:10px;text-align:center;color:#333">6</div>
<div class="c" style="left:0;width:19px;top:257.24px;font-size:10px;text-align:center;color:#333">7</div>
<div class="c" style="left:0;width:19px;top:272.24px;font-size:10px;text-align:center;color:#333">8</div>
<div class="c" style="left:0;width:19px;top:287.24px;font-size:10px;text-align:center;color:#333">9</div>
<div class="c" style="left:0;width:19px;top:302.24px;font-size:10px;text-align:center;color:#333">10</div>
<div class="c" style="left:0;width:19px;top:317.24px;font-size:10px;text-align:center;color:#333">11</div>
<div class="c" style="left:0;width:19px;top:332.24px;font-size:10px;text-align:center;color:#333">12</div>
<div class="c" style="left:0;width:19px;top:347.24px;font-size:10px;text-align:center;color:#333">13</div>
<div class="c" style="left:0;width:19px;top:362.24px;font-size:10px;text-align:center;color:#333">14</div>
<div class="c" style="left:0;width:19px;top:377.24px;font-size:10px;text-align:center;color:#333">15</div>
<div class="c" style="left:0;width:19px;top:392.24px;font-size:10px;text-align:center;color:#333">16</div>
<div class="c" style="left:0;width:19px;top:407.24px;font-size:10px;text-align:center;color:#333">17</div>
<div class="c" style="left:0;width:19px;top:422.24px;font-size:10px;text-align:center;color:#333">18</div>
<div class="c" style="left:0;width:19px;top:437.24px;font-size:10px;text-align:center;color:#333">19</div>
<div class="c" style="left:0;width:19px;top:452.24px;font-size:10px;text-align:center;color:#333">20</div>
<div class="c" style="left:0;width:19px;top:467.24px;font-size:10px;text-align:center;color:#333">21</div>
<div class="c" style="left:0;width:19px;top:482.24px;font-size:10px;text-align:center;color:#333">22</div>
<div class="c" style="left:0;width:19px;top:497.24px;font-size:10px;text-align:center;color:#333">23</div>
<div class="c d" style="left:21.7px;top:167.23px;font-size:10px">ID</div>
<div class="c d" style="left:40.7px;top:167.23px;font-size:10px">Indicators</div>
<div class="c d" style="left:94.7px;top:167.23px;font-size:10px">Name</div>
<div class="c d" style="left:279.7px;top:167.23px;font-size:10px">Type</div>
<div class="c d" style="left:326.7px;top:167.23px;font-size:10px">Material_Label</div>
<div class="c d" style="left:403.7px;top:167.23px;font-size:10px">Initials</div>
<div class="c d" style="left:442.7px;top:167.23px;font-size:10px">Group</div>
<div class="c d" style="left:479.7px;top:167.23px;font-size:10px">Standard_Rate</div>
<div class="c d" style="left:555.7px;top:167.23px;font-size:10px">Cost_Per_Use</div>
<div class="c d" style="left:627.7px;top:167.23px;font-size:10px">Accrue_At</div>
<div class="c d" style="left:684.7px;top:167.23px;font-size:10px">Code</div>
<div class="c dr" style="left:19px;width:18px;top:182.23px;font-size:10px;text-align:right">1</div>
<div class="c d" style="left:94.7px;top:182.23px;font-size:10px">G.C. General Management</div>
<div class="c d" style="left:279.7px;top:182.23px;font-size:10px">Work</div>
<div class="c d" style="left:403.7px;top:182.23px;font-size:10px">G</div>
<div class="c d" style="left:479.7px;top:182.23px;font-size:10px">$80.00/hr</div>
<div class="c d" style="left:555.7px;top:182.23px;font-size:10px">$0.00</div>
<div class="c d" style="left:627.7px;top:182.23px;font-size:10px">Prorated</div>
<div class="gtri" style="left:554px;top:179px"></div>
<div class="c dr" style="left:19px;width:18px;top:197.23px;font-size:10px;text-align:right">2</div>
<div class="c d" style="left:94.7px;top:197.23px;font-size:10px">G.C. Project Management</div>
<div class="c d" style="left:279.7px;top:197.23px;font-size:10px">Work</div>
<div class="c d" style="left:403.7px;top:197.23px;font-size:10px">G</div>
<div class="c d" style="left:479.7px;top:197.23px;font-size:10px">$70.00/hr</div>
<div class="c d" style="left:555.7px;top:197.23px;font-size:10px">$0.00</div>
<div class="c d" style="left:627.7px;top:197.23px;font-size:10px">Prorated</div>
<div class="gtri" style="left:554px;top:194px"></div>
<div class="c dr" style="left:19px;width:18px;top:212.23px;font-size:10px;text-align:right">3</div>
<div class="c d" style="left:94.7px;top:212.23px;font-size:10px">Steel Erection Contractor Management</div>
<div class="c d" style="left:279.7px;top:212.23px;font-size:10px">Work</div>
<div class="c d" style="left:403.7px;top:212.23px;font-size:10px">S</div>
<div class="c d" style="left:479.7px;top:212.23px;font-size:10px">$60.00/hr</div>
<div class="c d" style="left:555.7px;top:212.23px;font-size:10px">$0.00</div>
<div class="c d" style="left:627.7px;top:212.23px;font-size:10px">Prorated</div>
<div class="gtri" style="left:554px;top:209px"></div>
<div class="c dr" style="left:19px;width:18px;top:227.23px;font-size:10px;text-align:right">4</div>
<div class="c d" style="left:94.7px;top:227.23px;font-size:10px">Roofing Contractor Management</div>
<div class="c d" style="left:279.7px;top:227.23px;font-size:10px">Work</div>
<div class="c d" style="left:403.7px;top:227.23px;font-size:10px">R</div>
<div class="c d" style="left:479.7px;top:227.23px;font-size:10px">$70.00/hr</div>
<div class="c d" style="left:555.7px;top:227.23px;font-size:10px">$0.00</div>
<div class="c d" style="left:627.7px;top:227.23px;font-size:10px">Prorated</div>
<div class="gtri" style="left:554px;top:224px"></div>
<div class="c dr" style="left:19px;width:18px;top:242.23px;font-size:10px;text-align:right">5</div>
<div class="c d" style="left:94.7px;top:242.23px;font-size:10px">Elevator Contractor Management</div>
<div class="c d" style="left:279.7px;top:242.23px;font-size:10px">Work</div>
<div class="c d" style="left:403.7px;top:242.23px;font-size:10px">E</div>
<div class="c d" style="left:479.7px;top:242.23px;font-size:10px">$60.00/hr</div>
<div class="c d" style="left:555.7px;top:242.23px;font-size:10px">$0.00</div>
<div class="c d" style="left:627.7px;top:242.23px;font-size:10px">Prorated</div>
<div class="gtri" style="left:554px;top:239px"></div>
<div class="c dr" style="left:19px;width:18px;top:257.24px;font-size:10px;text-align:right">6</div>
<div class="c d" style="left:94.7px;top:257.24px;font-size:10px">Plumbing Contractor Management</div>
<div class="c d" style="left:279.7px;top:257.24px;font-size:10px">Work</div>
<div class="c d" style="left:403.7px;top:257.24px;font-size:10px">P</div>
<div class="c d" style="left:479.7px;top:257.24px;font-size:10px">$60.00/hr</div>
<div class="c d" style="left:555.7px;top:257.24px;font-size:10px">$0.00</div>
<div class="c d" style="left:627.7px;top:257.24px;font-size:10px">Prorated</div>
<div class="gtri" style="left:554px;top:254px"></div>
<div class="c dr" style="left:19px;width:18px;top:272.24px;font-size:10px;text-align:right">7</div>
<div class="c d" style="left:94.7px;top:272.24px;font-size:10px">Electric Contractor Management</div>
<div class="c d" style="left:279.7px;top:272.24px;font-size:10px">Work</div>
<div class="c d" style="left:403.7px;top:272.24px;font-size:10px">E</div>
<div class="c d" style="left:479.7px;top:272.24px;font-size:10px">$70.00/hr</div>
<div class="c d" style="left:555.7px;top:272.24px;font-size:10px">$0.00</div>
<div class="c d" style="left:627.7px;top:272.24px;font-size:10px">Prorated</div>
<div class="gtri" style="left:554px;top:269px"></div>
<div class="c dr" style="left:19px;width:18px;top:287.24px;font-size:10px;text-align:right">8</div>
<div class="c d" style="left:94.7px;top:287.24px;font-size:10px">HVAC Contractor Management</div>
<div class="c d" style="left:279.7px;top:287.24px;font-size:10px">Work</div>
<div class="c d" style="left:403.7px;top:287.24px;font-size:10px">H</div>
<div class="c d" style="left:479.7px;top:287.24px;font-size:10px">$60.00/hr</div>
<div class="c d" style="left:555.7px;top:287.24px;font-size:10px">$0.00</div>
<div class="c d" style="left:627.7px;top:287.24px;font-size:10px">Prorated</div>
<div class="gtri" style="left:554px;top:284px"></div>
<div class="c dr" style="left:19px;width:18px;top:302.24px;font-size:10px;text-align:right">9</div>
<div class="c d" style="left:94.7px;top:302.24px;font-size:10px">Electric Contractor</div>
<div class="c d" style="left:279.7px;top:302.24px;font-size:10px">Work</div>
<div class="c d" style="left:403.7px;top:302.24px;font-size:10px">E</div>
<div class="c d" style="left:479.7px;top:302.24px;font-size:10px">$60.00/hr</div>
<div class="c d" style="left:555.7px;top:302.24px;font-size:10px">$0.00</div>
<div class="c d" style="left:627.7px;top:302.24px;font-size:10px">Prorated</div>
<div class="gtri" style="left:554px;top:299px"></div>
<div class="c dr" style="left:19px;width:18px;top:317.24px;font-size:10px;text-align:right">10</div>
<div class="c d" style="left:94.7px;top:317.24px;font-size:10px">Plumbing Contractor</div>
<div class="c d" style="left:279.7px;top:317.24px;font-size:10px">Work</div>
<div class="c d" style="left:403.7px;top:317.24px;font-size:10px">P</div>
<div class="c d" style="left:479.7px;top:317.24px;font-size:10px">$60.00/hr</div>
<div class="c d" style="left:555.7px;top:317.24px;font-size:10px">$0.00</div>
<div class="c d" style="left:627.7px;top:317.24px;font-size:10px">Prorated</div>
<div class="gtri" style="left:554px;top:314px"></div>
<div class="c dr" style="left:19px;width:18px;top:332.24px;font-size:10px;text-align:right">11</div>
<div class="c d" style="left:94.7px;top:332.24px;font-size:10px">G.C. Survey Crew</div>
<div class="c d" style="left:279.7px;top:332.24px;font-size:10px">Work</div>
<div class="c d" style="left:403.7px;top:332.24px;font-size:10px">G</div>
<div class="c d" style="left:479.7px;top:332.24px;font-size:10px">$50.00/hr</div>
<div class="c d" style="left:555.7px;top:332.24px;font-size:10px">$0.00</div>
<div class="c d" style="left:627.7px;top:332.24px;font-size:10px">Prorated</div>
<div class="gtri" style="left:554px;top:329px"></div>
<div class="c dr" style="left:19px;width:18px;top:347.24px;font-size:10px;text-align:right">12</div>
<div class="c d" style="left:94.7px;top:347.24px;font-size:10px">Site Grading Contractor</div>
<div class="c d" style="left:279.7px;top:347.24px;font-size:10px">Work</div>
<div class="c d" style="left:403.7px;top:347.24px;font-size:10px">S</div>
<div class="c d" style="left:479.7px;top:347.24px;font-size:10px">$60.00/hr</div>
<div class="c d" style="left:555.7px;top:347.24px;font-size:10px">$0.00</div>
<div class="c d" style="left:627.7px;top:347.24px;font-size:10px">Prorated</div>
<div class="gtri" style="left:554px;top:344px"></div>
<div class="c dr" style="left:19px;width:18px;top:362.24px;font-size:10px;text-align:right">13</div>
<div class="c d" style="left:94.7px;top:362.24px;font-size:10px">G.C. Rough Carpenter Crew</div>
<div class="c d" style="left:279.7px;top:362.24px;font-size:10px">Work</div>
<div class="c d" style="left:403.7px;top:362.24px;font-size:10px">G</div>
<div class="c d" style="left:479.7px;top:362.24px;font-size:10px">$50.00/hr</div>
<div class="c d" style="left:555.7px;top:362.24px;font-size:10px">$0.00</div>
<div class="c d" style="left:627.7px;top:362.24px;font-size:10px">Prorated</div>
<div class="gtri" style="left:554px;top:359px"></div>
<div class="c dr" style="left:19px;width:18px;top:377.24px;font-size:10px;text-align:right">14</div>
<div class="c d" style="left:94.7px;top:377.24px;font-size:10px">G.C. Concrete Crew</div>
<div class="c d" style="left:279.7px;top:377.24px;font-size:10px">Work</div>
<div class="c d" style="left:403.7px;top:377.24px;font-size:10px">G</div>
<div class="c d" style="left:479.7px;top:377.24px;font-size:10px">$50.00/hr</div>
<div class="c d" style="left:555.7px;top:377.24px;font-size:10px">$0.00</div>
<div class="c d" style="left:627.7px;top:377.24px;font-size:10px">Prorated</div>
<div class="gtri" style="left:554px;top:374px"></div>
<div class="c dr" style="left:19px;width:18px;top:392.24px;font-size:10px;text-align:right">15</div>
<div class="c d" style="left:94.7px;top:392.24px;font-size:10px">G.C. Labor Crew</div>
<div class="c d" style="left:279.7px;top:392.24px;font-size:10px">Work</div>
<div class="c d" style="left:403.7px;top:392.24px;font-size:10px">G</div>
<div class="c d" style="left:479.7px;top:392.24px;font-size:10px">$50.00/hr</div>
<div class="c d" style="left:555.7px;top:392.24px;font-size:10px">$0.00</div>
<div class="c d" style="left:627.7px;top:392.24px;font-size:10px">Prorated</div>
<div class="gtri" style="left:554px;top:389px"></div>
<div class="c dr" style="left:19px;width:18px;top:407.24px;font-size:10px;text-align:right">16</div>
<div class="c d" style="left:94.7px;top:407.24px;font-size:10px">Elevator Contractor</div>
<div class="c d" style="left:279.7px;top:407.24px;font-size:10px">Work</div>
<div class="c d" style="left:403.7px;top:407.24px;font-size:10px">E</div>
<div class="c d" style="left:479.7px;top:407.24px;font-size:10px">$60.00/hr</div>
<div class="c d" style="left:555.7px;top:407.24px;font-size:10px">$0.00</div>
<div class="c d" style="left:627.7px;top:407.24px;font-size:10px">Prorated</div>
<div class="gtri" style="left:554px;top:404px"></div>
<div class="c dr" style="left:19px;width:18px;top:422.24px;font-size:10px;text-align:right">17</div>
<div class="c d" style="left:94.7px;top:422.24px;font-size:10px">G.C. Finish Carpenter Crew</div>
<div class="c d" style="left:279.7px;top:422.24px;font-size:10px">Work</div>
<div class="c d" style="left:403.7px;top:422.24px;font-size:10px">G</div>
<div class="c d" style="left:479.7px;top:422.24px;font-size:10px">$50.00/hr</div>
<div class="c d" style="left:555.7px;top:422.24px;font-size:10px">$0.00</div>
<div class="c d" style="left:627.7px;top:422.24px;font-size:10px">Prorated</div>
<div class="gtri" style="left:554px;top:419px"></div>
<div class="c dr" style="left:19px;width:18px;top:437.24px;font-size:10px;text-align:right">18</div>
<div class="c d" style="left:94.7px;top:437.24px;font-size:10px">HVAC Contractor</div>
<div class="c d" style="left:279.7px;top:437.24px;font-size:10px">Work</div>
<div class="c d" style="left:403.7px;top:437.24px;font-size:10px">H</div>
<div class="c d" style="left:479.7px;top:437.24px;font-size:10px">$60.00/hr</div>
<div class="c d" style="left:555.7px;top:437.24px;font-size:10px">$0.00</div>
<div class="c d" style="left:627.7px;top:437.24px;font-size:10px">Prorated</div>
<div class="gtri" style="left:554px;top:434px"></div>
<div class="c dr" style="left:19px;width:18px;top:452.24px;font-size:10px;text-align:right">19</div>
<div class="c d" style="left:94.7px;top:452.24px;font-size:10px">Drywall Contractor</div>
<div class="c d" style="left:279.7px;top:452.24px;font-size:10px">Work</div>
<div class="c d" style="left:403.7px;top:452.24px;font-size:10px">D</div>
<div class="c d" style="left:479.7px;top:452.24px;font-size:10px">$60.00/hr</div>
<div class="c d" style="left:555.7px;top:452.24px;font-size:10px">$0.00</div>
<div class="c d" style="left:627.7px;top:452.24px;font-size:10px">Prorated</div>
<div class="gtri" style="left:554px;top:449px"></div>
<div class="c dr" style="left:19px;width:18px;top:467.24px;font-size:10px;text-align:right">20</div>
<div class="c d" style="left:94.7px;top:467.24px;font-size:10px">Painting Contractor</div>
<div class="c d" style="left:279.7px;top:467.24px;font-size:10px">Work</div>
<div class="c d" style="left:403.7px;top:467.24px;font-size:10px">P</div>
<div class="c d" style="left:479.7px;top:467.24px;font-size:10px">$70.00/hr</div>
<div class="c d" style="left:555.7px;top:467.24px;font-size:10px">$0.00</div>
<div class="c d" style="left:627.7px;top:467.24px;font-size:10px">Prorated</div>
<div class="gtri" style="left:554px;top:464px"></div>
<div class="c dr" style="left:19px;width:18px;top:482.24px;font-size:10px;text-align:right">21</div>
<div class="c d" style="left:94.7px;top:482.24px;font-size:10px">Carpet Contractor</div>
<div class="c d" style="left:279.7px;top:482.24px;font-size:10px">Work</div>
<div class="c d" style="left:403.7px;top:482.24px;font-size:10px">C</div>
<div class="c d" style="left:479.7px;top:482.24px;font-size:10px">$60.00/hr</div>
<div class="c d" style="left:555.7px;top:482.24px;font-size:10px">$0.00</div>
<div class="c d" style="left:627.7px;top:482.24px;font-size:10px">Prorated</div>
<div class="gtri" style="left:554px;top:479px"></div>
<div class="c dr" style="left:19px;width:18px;top:497.24px;font-size:10px;text-align:right">22</div>
<div class="c d" style="left:94.7px;top:497.24px;font-size:10px">Landscape Contractor</div>
<div class="c d" style="left:279.7px;top:497.24px;font-size:10px">Work</div>
<div class="c d" style="left:403.7px;top:497.24px;font-size:10px">L</div>
<div class="c d" style="left:479.7px;top:497.24px;font-size:10px">$60.00/hr</div>
<div class="c d" style="left:555.7px;top:497.24px;font-size:10px">$0.00</div>
<div class="c d" style="left:627.7px;top:497.24px;font-size:10px">Prorated</div>
<div class="gtri" style="left:554px;top:494px"></div>
<div class="a" style="left:18px;top:162px;width:22px;height:17px;border:2px solid #2b7a4d"></div>
<div class="a" style="left:36px;top:175px;width:6px;height:6px;background:#217346;border:1px solid #fff"></div>
<div class="a" style="left:1010px;top:149px;width:14px;height:360px;background:#e6e6e6"></div>
<div class="a" style="left:1012px;top:151px;width:11px;height:11px;background:#fff;border:1px solid #d0d0d0"></div>
<svg class="a" style="left:1014px;top:154px;" width="7" height="5" viewBox="0 0 7 5"><path d="M0.5 4h6L3.5 0.5z" fill="#666"/></svg>
<div class="a" style="left:1012px;top:161px;width:11px;height:241px;background:#fff;border:1px solid #d0d0d0"></div>
<div class="a" style="left:1012px;top:497px;width:11px;height:12px;background:#fff;border:1px solid #d0d0d0"></div>
<svg class="a" style="left:1014px;top:501px;" width="7" height="5" viewBox="0 0 7 5"><path d="M0.5 1h6L3.5 4.5z" fill="#666"/></svg>
<div class="a" style="left:0px;top:509px;width:1024px;height:21px;background:#e6e6e6"></div>
<div class="a" style="left:0px;top:509px;width:1010px;height:1px;background:#c9c9c9"></div>
<svg class="a" style="left:20px;top:517px;" width="4" height="5" viewBox="0 0 4 5"><path d="M3 0.5L0.8 2.5 3 4.5z" fill="#c4c4c4" stroke="#c4c4c4" stroke-width="0.6"/></svg>
<svg class="a" style="left:42px;top:517px;" width="4" height="5" viewBox="0 0 4 5"><path d="M0.8 0.5L3 2.5 0.8 4.5z" fill="#c4c4c4" stroke="#c4c4c4" stroke-width="0.6"/></svg>
<div class="a" style="left:75px;top:509px;width:94px;height:18px;background:#fff;border-left:1px solid #c6c6c6;border-right:1px solid #c6c6c6"></div>
<div class="a" style="left:75px;top:526px;width:94px;height:2px;background:#3f8b5e"></div>
<div class="t" style="left:85px;top:513.74px;font-size:10px;color:#217346;font-weight:bold;letter-spacing:-0.5px">Resource_Table1</div>
<svg class="a" style="left:193px;top:513px;" width="13" height="13" viewBox="0 0 13 13"><circle cx="6.5" cy="6.5" r="5.5" fill="none" stroke="#777" stroke-width="1"/><path d="M6.5 3.5v6M3.5 6.5h6" stroke="#777" stroke-width="1.1"/></svg>
<div class="a" style="left:615px;top:516px;width:1px;height:1.3px;background:#999"></div>
<div class="a" style="left:615px;top:519px;width:1px;height:1.3px;background:#999"></div>
<div class="a" style="left:615px;top:522px;width:1px;height:1.3px;background:#999"></div>
<div class="a" style="left:627px;top:514px;width:382px;height:12px;background:#fff;border:1px solid #c8c8c8"></div>
<div class="a" style="left:638px;top:515px;width:2px;height:10px;background:#d6d6d6"></div>
<svg class="a" style="left:631px;top:516px;" width="4" height="7" viewBox="0 0 4 7"><path d="M3.5 0.5v6L0.5 3.5z" fill="#666"/></svg>
<div class="a" style="left:977px;top:515px;width:21px;height:10px;background:#dcdcdc"></div>
<div class="a" style="left:998px;top:515px;width:1px;height:10px;background:#d6d6d6"></div>
<svg class="a" style="left:1002px;top:516px;" width="4" height="7" viewBox="0 0 4 7"><path d="M0.5 0.5v6l3-3z" fill="#666"/></svg>
<div class="a" style="left:0px;top:530px;width:1024px;height:15px;background:#f1f1f1;border-top:1px solid #cdcdcd"></div>
<div class="t" style="left:5.5px;top:535.56px;font-size:8.2px;color:#555;font-weight:normal;">Ready</div>
<div class="a" style="left:807px;top:530px;width:27px;height:15px;background:#cfcfcf"></div>
<svg class="a" style="left:815px;top:532px;" width="11" height="11" viewBox="0 0 11 11"><rect x="0.5" y="0.5" width="10" height="10" fill="none" stroke="#666" stroke-width="1"/><path d="M3.8 0.5v10M7.2 0.5v10M0.5 3.8h10M0.5 7.2h10" stroke="#666" stroke-width="1"/></svg>
<svg class="a" style="left:844px;top:532px;" width="11" height="11" viewBox="0 0 11 11"><rect x="0.5" y="0.5" width="10" height="10" fill="none" stroke="#666" stroke-width="1"/><rect x="3" y="2.5" width="5" height="6" fill="none" stroke="#666" stroke-width="0.8"/></svg>
<svg class="a" style="left:872px;top:532px;" width="11" height="11" viewBox="0 0 11 11"><rect x="0.5" y="0.5" width="10" height="10" fill="none" stroke="#666" stroke-width="1"/><path d="M3.5 0.5v4.5h4V0.5M0.5 7h10" fill="none" stroke="#666" stroke-width="0.9"/></svg>
<div class="a" style="left:895px;top:537px;width:5px;height:1.3px;background:#555"></div>
<div class="a" style="left:903px;top:537px;width:75px;height:1px;background:#bbb"></div>
<div class="a" style="left:939px;top:533px;width:3px;height:9px;background:#555"></div>
<svg class="a" style="left:981px;top:534px;" width="7" height="7" viewBox="0 0 7 7"><path d="M3.5 0v7M0 3.5h7" stroke="#555" stroke-width="1.3"/></svg>
<div class="t" style="left:999px;top:534.80px;font-size:8.5px;color:#555;font-weight:normal;">100%</div>
<svg class="a" style="left:1003px;top:259px;filter:drop-shadow(0 0 2px rgba(0,0,0,.25))" width="28" height="28" viewBox="0 0 28 28"><circle cx="14" cy="14" r="13" fill="#0d7de0"/><g fill="#fff"><path d="M9 7l-4 2.6 4 2.6 4-2.6z"/><path d="M19 7l-4 2.6 4 2.6 4-2.6z"/><path d="M9 12.2l-4 2.6 4 2.6 4-2.6z"/><path d="M19 12.2l-4 2.6 4 2.6 4-2.6z"/><path d="M14 16.4l-4 2.6 4 2.6 4-2.6z"/></g></svg>
</body></html>
